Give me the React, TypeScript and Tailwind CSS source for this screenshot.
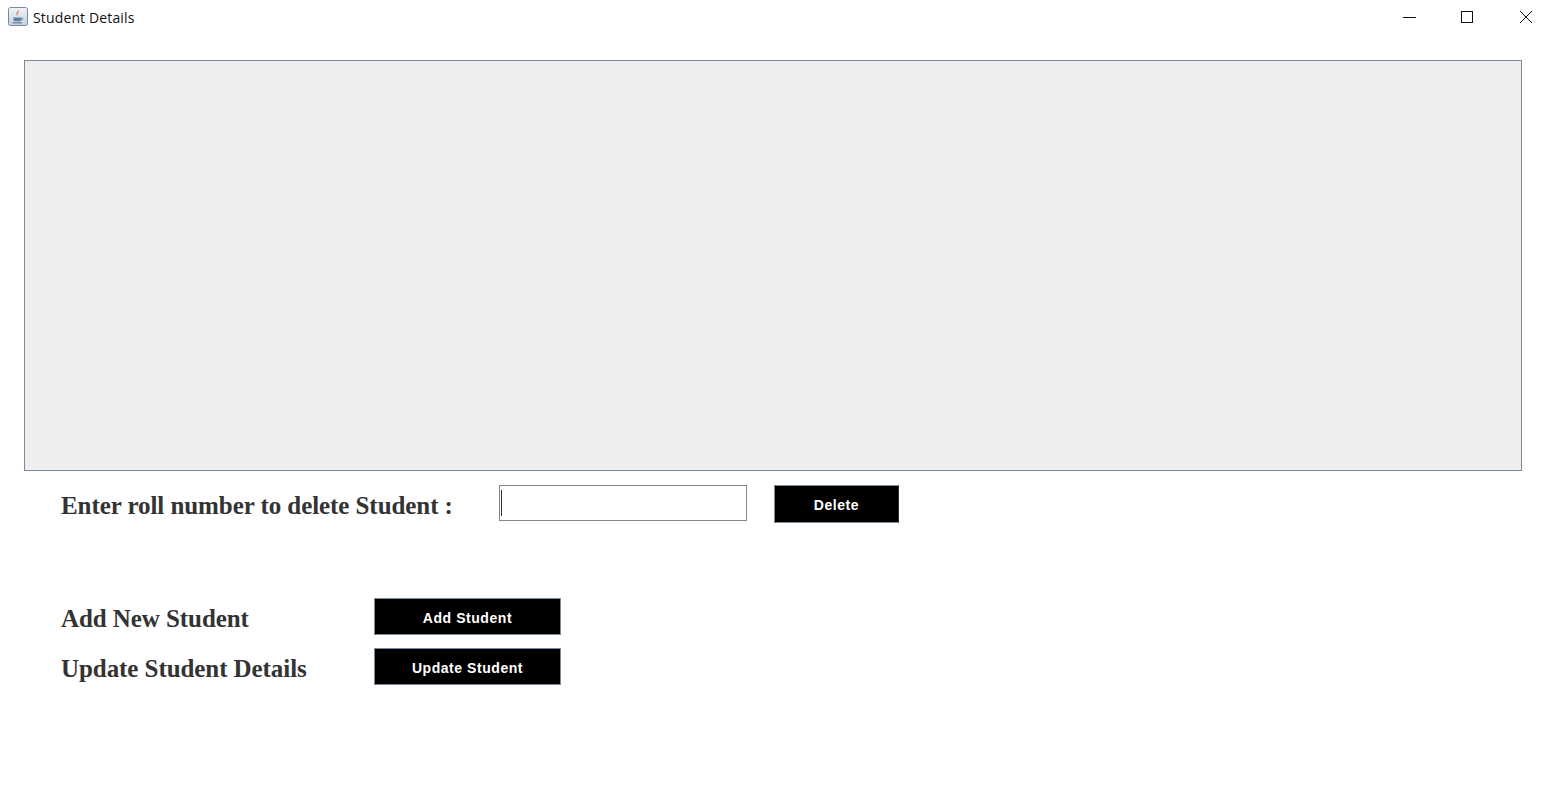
function JavaIcon() {
  return (
    <svg width="20" height="20" viewBox="0 0 20 20" className="shrink-0">
      <defs>
        <linearGradient id="tile" x1="0" y1="0" x2="0" y2="1">
          <stop offset="0" stopColor="#f1f4f8" />
          <stop offset="1" stopColor="#c3d0de" />
        </linearGradient>
      </defs>
      <rect x="0.5" y="0.5" width="19" height="18" rx="2" fill="url(#tile)" stroke="#76899e" />
      <path d="M10.5 3c1.500 2-2 3-1 5 .4.8 1 1.200 1 1.200-1.500-.7-2.600-1.800-2-3.200C9 4.800 10.500 4.200 10.500 3z" fill="#d9622b" />
      <path d="M12 5.500c-1.200.8-1.700 1.500-1.200 3-.5-1.400-.3-2.300 1.200-3z" fill="#e0873f" />
      <path d="M5.500 10.500h7.500v2c0 1-.8 1.800-1.800 1.800H7.300c-1 0-1.800-.8-1.800-1.800z" fill="#5f7f9f" />
      <path d="M13 11h1c1 0 1 1.800-.2 1.800H13" fill="none" stroke="#5f7f9f" />
      <path d="M4.500 15.800h9.500" stroke="#5f7f9f" strokeWidth="1.200" />
    </svg>
  );
}

function WindowButtons() {
  return (
    <div className="flex items-center">
      <svg width="14" height="14" viewBox="0 0 14 14" className="mr-[44px]">
        <path d="M0 7.500h13" stroke="#111" strokeWidth="1" />
      </svg>
      <svg width="13" height="13" viewBox="0 0 13 13" className="mr-[45px]">
        <rect x="0.500" y="0.500" width="11" height="11" fill="none" stroke="#111" strokeWidth="1" />
      </svg>
      <svg width="14" height="14" viewBox="0 0 14 14">
        <path d="M1 1l12 12M13 1L1 13" stroke="#111" strokeWidth="1" />
      </svg>
    </div>
  );
}

const labelClass = "font-['Liberation_Serif',serif] font-bold text-[25px] tracking-[-0.07px] leading-[30px] text-[#333333] whitespace-nowrap";
const buttonClass = "bg-black text-white font-['Liberation_Sans',sans-serif] font-bold text-[14px] tracking-[0.55px] border border-[#7a8a99] flex items-center justify-center pt-[3px]";

export default function App() {
  return (
    <div className="w-[1548px] h-[801px] bg-white overflow-hidden">
      <div className="h-[34px] flex items-center justify-between pl-[8px] pr-[15px]">
        <div className="flex items-center gap-[5px]">
          <JavaIcon />
          <span className="font-['Open_Sans',sans-serif] text-[14px] tracking-[0.14px] text-[#111]">Student Details</span>
        </div>
        <WindowButtons />
      </div>

      <div className="ml-[24px] mt-[26px] w-[1498px] h-[411px] bg-[#eeeeee] border border-[#7a8a99]" />

      <div className="ml-[61px] mt-[14px] flex items-start">
        <div className={`${labelClass} w-[438px] pt-[6px]`}>Enter roll number to delete Student :</div>
        <div className="w-[248px] h-[36px] bg-white border border-[#7f8790] flex items-center pl-[1px]">
          <div className="w-px h-[26px] bg-[#333]" />
        </div>
        <button className={`${buttonClass} ml-[27px] w-[125px] h-[38px] border-r-[#333]`}>Delete</button>
      </div>

      <div className="ml-[61px] mt-[75px] flex items-center h-[37px]">
        <div className={`${labelClass} w-[313px] pt-[4px]`}>Add New Student</div>
        <button className={`${buttonClass} w-[187px] h-[37px]`}>Add Student</button>
      </div>

      <div className="ml-[61px] mt-[13px] flex items-center h-[37px]">
        <div className={`${labelClass} w-[313px] pt-[4px]`}>Update Student Details</div>
        <button className={`${buttonClass} w-[187px] h-[37px]`}>Update Student</button>
      </div>
    </div>
  );
}
